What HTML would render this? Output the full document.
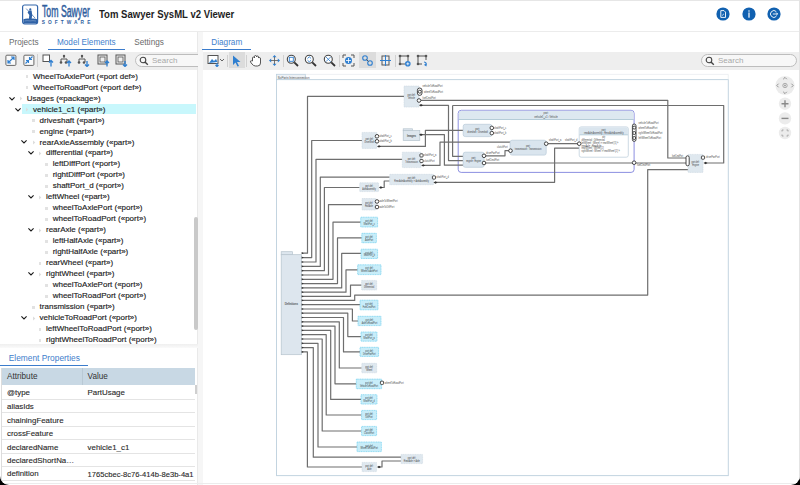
<!DOCTYPE html>
<html><head><meta charset="utf-8">
<style>
*{box-sizing:border-box;margin:0;padding:0}
html,body{width:800px;height:485px;overflow:hidden;background:#000}
body{font-family:"Liberation Sans", sans-serif;position:relative}
#app{position:absolute;left:0;top:0;width:800px;height:485px;background:#fff;border-bottom-left-radius:9px;border-bottom-right-radius:9px;overflow:hidden}
.a{position:absolute}
.t{position:absolute;white-space:nowrap;line-height:1}
svg text{font-family:"Liberation Sans", sans-serif}
</style></head><body>
<div id="app">
<svg class="a" style="left:0;top:0" width="800" height="485" viewBox="0 0 800 485">
<rect x="276.5" y="79.6" width="451.8" height="396" fill="#fff" stroke="#c3d4e0" stroke-width="1"/>
<path d="M305.3,74.4 H728.3 V79.6" fill="none" stroke="#e6ebef" stroke-width="0.7"/>
<rect x="276.5" y="74.3" width="28.8" height="5.3" fill="#eef2f6" stroke="#bcd0de" stroke-width="0.8"/>
<text transform="translate(277.8,78.6) scale(1,1.4)" font-size="3.0" fill="#2a2a2a" stroke="#2a2a2a" stroke-width="0.05" text-anchor="start" opacity="0.65">SoParts Interconnection</text>
<rect x="458.2" y="110.3" width="175.9" height="62.1" rx="3" fill="#fff" stroke="#7f82dc" stroke-width="0.9"/>
<path d="M458.7,119.5 V113.3 Q458.7,110.8 461.2,110.8 H631.1 Q633.6,110.8 633.6,113.3 V119.5 Z" fill="#dde8f0"/>
<line x1="458.7" y1="119.5" x2="633.6" y2="119.5" stroke="#8fb2c3" stroke-width="0.6"/>
<text transform="translate(546,114.3) scale(1,1.4)" font-size="2.5" fill="#2a2a2a" stroke="#2a2a2a" stroke-width="0.05" text-anchor="middle" opacity="0.65">part:</text>
<text transform="translate(546,117.6) scale(1,1.4)" font-size="2.5" fill="#2a2a2a" stroke="#2a2a2a" stroke-width="0.05" text-anchor="middle" opacity="0.65">vehicle1_c1 : Vehicle</text>
<polyline points="421,100.3 667.8,100.3 667.8,158 687,158" fill="none" stroke="#6e6e6e" stroke-width="1.2" stroke-linejoin="round"/>
<polyline points="452.6,105.5 723.7,105.5 723.7,163 705.5,163" fill="none" stroke="#6e6e6e" stroke-width="1.2" stroke-linejoin="round"/>
<polyline points="421,105.3 448.5,105.3 448.5,160.6 463,160.6" fill="none" stroke="#6e6e6e" stroke-width="1.2" stroke-linejoin="round"/>
<polyline points="452.6,105.5 452.6,156.3 463,156.3" fill="none" stroke="#6e6e6e" stroke-width="1.2" stroke-linejoin="round"/>
<polyline points="421,134.7 444.4,134.7 444.4,165.2 463,165.2" fill="none" stroke="#6e6e6e" stroke-width="1.2" stroke-linejoin="round"/>
<polyline points="379,146.4 425.4,146.4 425.4,130.4 463,130.4" fill="none" stroke="#6e6e6e" stroke-width="1.2" stroke-linejoin="round"/>
<polyline points="423.2,165.4 440,165.4 440,142.2 510.3,142.2" fill="none" stroke="#6e6e6e" stroke-width="1.2" stroke-linejoin="round"/>
<polyline points="435.5,182.3 554.6,182.3 554.6,148.2 579.3,148.2" fill="none" stroke="#6e6e6e" stroke-width="1.2" stroke-linejoin="round"/>
<polyline points="380.7,187.5 384.2,187.5 384.2,181 389.7,181" fill="none" stroke="#6e6e6e" stroke-width="1.2" stroke-linejoin="round"/>
<polyline points="484,155.8 505,155.8 505,150.7 510.5,150.7" fill="none" stroke="#6e6e6e" stroke-width="1.2" stroke-linejoin="round"/>
<polyline points="546.2,143.7 579.2,143.7" fill="none" stroke="#6e6e6e" stroke-width="1.2" stroke-linejoin="round"/>
<polyline points="484,163 687,163" fill="none" stroke="#6e6e6e" stroke-width="1.2" stroke-linejoin="round"/>
<polyline points="688,169.6 647.7,169.6 647.7,295.1 354.7,295.1 354.7,300.4 302,300.4" fill="none" stroke="#6e6e6e" stroke-width="1.2" stroke-linejoin="round"/>
<polyline points="302,253.2 307.5,253.2 307.5,96.4 404,96.4" fill="none" stroke="#6e6e6e" stroke-width="1.2" stroke-linejoin="round"/>
<polyline points="302,257.6 311.7,257.6 311.7,140.5 362,140.5" fill="none" stroke="#6e6e6e" stroke-width="1.2" stroke-linejoin="round"/>
<polyline points="302,262.0 316.0,262.0 316.0,159.3 402.3,159.3" fill="none" stroke="#6e6e6e" stroke-width="1.2" stroke-linejoin="round"/>
<polyline points="302,266.4 320.3,266.4 320.3,177.1 389.7,177.1" fill="none" stroke="#6e6e6e" stroke-width="1.2" stroke-linejoin="round"/>
<polyline points="302,270.7 324.4,270.7 324.4,187.5 359.7,187.5" fill="none" stroke="#6e6e6e" stroke-width="1.2" stroke-linejoin="round"/>
<polyline points="302,275.0 328.5,275.0 328.5,204.6 362,204.6" fill="none" stroke="#6e6e6e" stroke-width="1.2" stroke-linejoin="round"/>
<polyline points="302,279.3 333.0,279.3 333.0,222.2 360.7,222.2" fill="none" stroke="#6e6e6e" stroke-width="1.2" stroke-linejoin="round"/>
<polyline points="302,283.6 337.5,283.6 337.5,237.8 361.8,237.8" fill="none" stroke="#6e6e6e" stroke-width="1.2" stroke-linejoin="round"/>
<polyline points="302,287.9 341.7,287.9 341.7,253.3 361,253.3" fill="none" stroke="#6e6e6e" stroke-width="1.2" stroke-linejoin="round"/>
<polyline points="302,292.2 346.0,292.2 346.0,269.8 357.7,269.8" fill="none" stroke="#6e6e6e" stroke-width="1.2" stroke-linejoin="round"/>
<polyline points="302,296.4 350.5,296.4 350.5,285.2 361.6,285.2" fill="none" stroke="#6e6e6e" stroke-width="1.2" stroke-linejoin="round"/>
<polyline points="302,304.6 360,304.6" fill="none" stroke="#6e6e6e" stroke-width="1.2" stroke-linejoin="round"/>
<polyline points="302,309.0 352.4,309.0 352.4,321.0 358,321.0" fill="none" stroke="#6e6e6e" stroke-width="1.2" stroke-linejoin="round"/>
<polyline points="302,313.2 347.8,313.2 347.8,336.6 361,336.6" fill="none" stroke="#6e6e6e" stroke-width="1.2" stroke-linejoin="round"/>
<polyline points="302,317.5 343.5,317.5 343.5,351.9 360,351.9" fill="none" stroke="#6e6e6e" stroke-width="1.2" stroke-linejoin="round"/>
<polyline points="302,321.8 339.3,321.8 339.3,368.0 361.7,368.0" fill="none" stroke="#6e6e6e" stroke-width="1.2" stroke-linejoin="round"/>
<polyline points="302,326.1 335.0,326.1 335.0,383.8 356.3,383.8" fill="none" stroke="#6e6e6e" stroke-width="1.2" stroke-linejoin="round"/>
<polyline points="302,330.4 330.7,330.4 330.7,399.4 361,399.4" fill="none" stroke="#6e6e6e" stroke-width="1.2" stroke-linejoin="round"/>
<polyline points="302,334.7 326.2,334.7 326.2,415.0 361.6,415.0" fill="none" stroke="#6e6e6e" stroke-width="1.2" stroke-linejoin="round"/>
<polyline points="302,339.0 322.2,339.0 322.2,431.0 361.6,431.0" fill="none" stroke="#6e6e6e" stroke-width="1.2" stroke-linejoin="round"/>
<polyline points="302,343.3 318.0,343.3 318.0,447.0 357,447.0" fill="none" stroke="#6e6e6e" stroke-width="1.2" stroke-linejoin="round"/>
<polyline points="302,347.6 313.3,347.6 313.3,457.2 401,457.2" fill="none" stroke="#6e6e6e" stroke-width="1.2" stroke-linejoin="round"/>
<polyline points="302,351.9 307.4,351.9 307.4,467.0 362,467.0" fill="none" stroke="#6e6e6e" stroke-width="1.2" stroke-linejoin="round"/>
<polyline points="379,467 382,467 382,461 401,461" fill="none" stroke="#6e6e6e" stroke-width="1.2" stroke-linejoin="round"/>
<rect x="281.2" y="251.7" width="11.3" height="3.2" fill="#dde6ee" stroke="#b5c3cd" stroke-width="0.7"/>
<rect x="281.2" y="254.7" width="20.3" height="100" fill="#dde6ee" stroke="#b5c3cd" stroke-width="0.7"/>
<text transform="translate(291.3,305) scale(1,1.4)" font-size="2.8" fill="#2a2a2a" stroke="#2a2a2a" stroke-width="0.14" text-anchor="middle" opacity="0.65">Definitions</text>
<path d="M301.6,252.1 L303.8,253.2 L301.6,254.29999999999998 Z" fill="#333"/>
<path d="M301.6,256.5 L303.8,257.6 L301.6,258.70000000000005 Z" fill="#333"/>
<path d="M301.6,260.9 L303.8,262.0 L301.6,263.1 Z" fill="#333"/>
<path d="M301.6,265.29999999999995 L303.8,266.4 L301.6,267.5 Z" fill="#333"/>
<path d="M301.6,269.59999999999997 L303.8,270.7 L301.6,271.8 Z" fill="#333"/>
<path d="M301.6,273.9 L303.8,275.0 L301.6,276.1 Z" fill="#333"/>
<path d="M301.6,278.2 L303.8,279.3 L301.6,280.40000000000003 Z" fill="#333"/>
<path d="M301.6,282.5 L303.8,283.6 L301.6,284.70000000000005 Z" fill="#333"/>
<path d="M301.6,286.79999999999995 L303.8,287.9 L301.6,289.0 Z" fill="#333"/>
<path d="M301.6,291.09999999999997 L303.8,292.2 L301.6,293.3 Z" fill="#333"/>
<path d="M301.6,295.29999999999995 L303.8,296.4 L301.6,297.5 Z" fill="#333"/>
<path d="M301.6,307.9 L303.8,309.0 L301.6,310.1 Z" fill="#333"/>
<path d="M301.6,312.09999999999997 L303.8,313.2 L301.6,314.3 Z" fill="#333"/>
<path d="M301.6,316.4 L303.8,317.5 L301.6,318.6 Z" fill="#333"/>
<path d="M301.6,320.7 L303.8,321.8 L301.6,322.90000000000003 Z" fill="#333"/>
<path d="M301.6,325.0 L303.8,326.1 L301.6,327.20000000000005 Z" fill="#333"/>
<path d="M301.6,329.29999999999995 L303.8,330.4 L301.6,331.5 Z" fill="#333"/>
<path d="M301.6,333.59999999999997 L303.8,334.7 L301.6,335.8 Z" fill="#333"/>
<path d="M301.6,337.9 L303.8,339.0 L301.6,340.1 Z" fill="#333"/>
<path d="M301.6,342.2 L303.8,343.3 L301.6,344.40000000000003 Z" fill="#333"/>
<path d="M301.6,346.5 L303.8,347.6 L301.6,348.70000000000005 Z" fill="#333"/>
<path d="M301.6,350.79999999999995 L303.8,351.9 L301.6,353.0 Z" fill="#333"/>
<path d="M301.6,303.5 L303.8,304.6 L301.6,305.7 Z" fill="#333"/>
<path d="M301.6,299.3 L303.8,300.4 L301.6,301.5 Z" fill="#333"/>
<rect x="404" y="86" width="15.100000000000023" height="21.099999999999994" rx="0.3" fill="#dfe8ef" stroke="#c5d2dc" stroke-width="0.5" stroke-dasharray="1.2 0.5"/>
<text transform="translate(411.5,96.2) scale(1,1.55)" font-size="2.15" fill="#2a2a2a" stroke="#2a2a2a" stroke-width="0.06" text-anchor="middle" opacity="0.65">part def:</text>
<text transform="translate(411.5,99.1) scale(1,1.55)" font-size="2.15" fill="#2a2a2a" stroke="#2a2a2a" stroke-width="0.06" text-anchor="middle" opacity="0.65">Vehicle</text>
<rect x="417.4" y="88" width="4.6" height="7.4" rx="2.3" fill="#fff" stroke="#333" stroke-width="0.9"/>
<circle cx="419.8" cy="91.7" r="1.5" fill="#fff" stroke="#333" stroke-width="0.9"/>
<circle cx="419" cy="100.5" r="1.8" fill="#fff" stroke="#333" stroke-width="0.9"/>
<path d="M419,105.3 L421,104.1 L423,105.3 L421,106.5 Z" fill="#333"/>
<text transform="translate(422.5,87.3) scale(1,1.4)" font-size="2.4" fill="#2a2a2a" stroke="#2a2a2a" stroke-width="0.05" text-anchor="start" opacity="0.65">vehicleToRoadPort</text>
<text transform="translate(424,92.6) scale(1,1.4)" font-size="2.4" fill="#2a2a2a" stroke="#2a2a2a" stroke-width="0.05" text-anchor="start" opacity="0.65">wheelToRoadPort</text>
<text transform="translate(422.5,98.8) scale(1,1.4)" font-size="2.4" fill="#2a2a2a" stroke="#2a2a2a" stroke-width="0.05" text-anchor="start" opacity="0.65">fuelCmdPort</text>
<rect x="403.2" y="128.8" width="9.4" height="2" fill="#dde6ee" stroke="#b5c3cd" stroke-width="0.7"/>
<rect x="403.2" y="130.6" width="16.6" height="10" fill="#dde6ee" stroke="#b5c3cd" stroke-width="0.7"/>
<text transform="translate(411.5,137) scale(1,1.4)" font-size="2.7" fill="#2a2a2a" stroke="#2a2a2a" stroke-width="0.14" text-anchor="middle" opacity="0.65">Images</text>
<path d="M419,134.7 L421,133.5 L423,134.7 L421,135.89999999999998 Z" fill="#333"/>
<rect x="362" y="132.4" width="14.800000000000011" height="16.0" rx="0.3" fill="#dfe8ef" stroke="#c5d2dc" stroke-width="0.5" stroke-dasharray="1.2 0.5"/>
<text transform="translate(369.4,140.1) scale(1,1.55)" font-size="2.15" fill="#2a2a2a" stroke="#2a2a2a" stroke-width="0.06" text-anchor="middle" opacity="0.65">part def:</text>
<text transform="translate(369.4,143.0) scale(1,1.55)" font-size="2.15" fill="#2a2a2a" stroke="#2a2a2a" stroke-width="0.06" text-anchor="middle" opacity="0.65">DriveShaft</text>
<circle cx="377" cy="136.3" r="1.8" fill="#fff" stroke="#333" stroke-width="0.9"/>
<circle cx="377" cy="141.3" r="1.8" fill="#fff" stroke="#333" stroke-width="0.9"/>
<text transform="translate(379.5,137) scale(1,1.4)" font-size="2.4" fill="#2a2a2a" stroke="#2a2a2a" stroke-width="0.05" text-anchor="start" opacity="0.65">shaftPort_c</text>
<text transform="translate(379.5,142) scale(1,1.4)" font-size="2.4" fill="#2a2a2a" stroke="#2a2a2a" stroke-width="0.05" text-anchor="start" opacity="0.65">shaftPort_b</text>
<path d="M377,146.4 L379,145.20000000000002 L381,146.4 L379,147.6 Z" fill="#333"/>
<rect x="402.3" y="152.2" width="18.69999999999999" height="15.400000000000006" rx="0.3" fill="#dfe8ef" stroke="#c5d2dc" stroke-width="0.5" stroke-dasharray="1.2 0.5"/>
<text transform="translate(411.6,159.6) scale(1,1.55)" font-size="2.15" fill="#2a2a2a" stroke="#2a2a2a" stroke-width="0.06" text-anchor="middle" opacity="0.65">part def:</text>
<text transform="translate(411.6,162.5) scale(1,1.55)" font-size="2.15" fill="#2a2a2a" stroke="#2a2a2a" stroke-width="0.06" text-anchor="middle" opacity="0.65">Transmission</text>
<rect x="419.9" y="153.8" width="3.2" height="3.2" rx="0.8" fill="#fff" stroke="#333" stroke-width="0.9"/>
<rect x="419.9" y="159.4" width="3.2" height="3.2" rx="0.8" fill="#fff" stroke="#333" stroke-width="0.9"/>
<text transform="translate(424,156) scale(1,1.4)" font-size="2.4" fill="#2a2a2a" stroke="#2a2a2a" stroke-width="0.05" text-anchor="start" opacity="0.65">shaftPort_a</text>
<text transform="translate(424,161.6) scale(1,1.4)" font-size="2.4" fill="#2a2a2a" stroke="#2a2a2a" stroke-width="0.05" text-anchor="start" opacity="0.65">clutchPort</text>
<path d="M421.2,165.4 L423.2,164.20000000000002 L425.2,165.4 L423.2,166.6 Z" fill="#333"/>
<rect x="389.7" y="174.3" width="43.900000000000034" height="10.399999999999977" rx="0.3" fill="#dfe8ef" stroke="#c5d2dc" stroke-width="0.5" stroke-dasharray="1.2 0.5"/>
<text transform="translate(411.6,179.2) scale(1,1.55)" font-size="2.15" fill="#2a2a2a" stroke="#2a2a2a" stroke-width="0.06" text-anchor="middle" opacity="0.65">part def:</text>
<text transform="translate(411.6,182.1) scale(1,1.55)" font-size="2.15" fill="#2a2a2a" stroke="#2a2a2a" stroke-width="0.06" text-anchor="middle" opacity="0.65">RearAxleAssembly :> AxleAssembly</text>
<rect x="432.4" y="175.9" width="3.2" height="3.2" rx="0.8" fill="#fff" stroke="#333" stroke-width="0.9"/>
<text transform="translate(436.5,178.2) scale(1,1.4)" font-size="2.4" fill="#2a2a2a" stroke="#2a2a2a" stroke-width="0.05" text-anchor="start" opacity="0.65">shaftPort_d</text>
<path d="M433.5,182.5 L435.5,181.3 L437.5,182.5 L435.5,183.7 Z" fill="#333"/>
<rect x="359.7" y="182.8" width="18.900000000000034" height="8.799999999999983" rx="0.3" fill="#dfe8ef" stroke="#c5d2dc" stroke-width="0.5" stroke-dasharray="1.2 0.5"/>
<text transform="translate(369.1,186.89999999999998) scale(1,1.55)" font-size="2.15" fill="#2a2a2a" stroke="#2a2a2a" stroke-width="0.06" text-anchor="middle" opacity="0.65">part def:</text>
<text transform="translate(369.1,189.79999999999998) scale(1,1.55)" font-size="2.15" fill="#2a2a2a" stroke="#2a2a2a" stroke-width="0.06" text-anchor="middle" opacity="0.65">AxleAssembly</text>
<path d="M378.9,187.5 L380.9,186.3 L382.9,187.5 L380.9,188.7 Z" fill="#333"/>
<rect x="362" y="198.5" width="14" height="11.5" rx="0.3" fill="#dfe8ef" stroke="#c5d2dc" stroke-width="0.5" stroke-dasharray="1.2 0.5"/>
<text transform="translate(369,203.89999999999998) scale(1,1.55)" font-size="2.15" fill="#2a2a2a" stroke="#2a2a2a" stroke-width="0.06" text-anchor="middle" opacity="0.65">part def:</text>
<text transform="translate(369,206.79999999999998) scale(1,1.55)" font-size="2.15" fill="#2a2a2a" stroke="#2a2a2a" stroke-width="0.06" text-anchor="middle" opacity="0.65">HalfAxle</text>
<circle cx="377" cy="201.5" r="1.8" fill="#fff" stroke="#333" stroke-width="0.9"/>
<circle cx="377" cy="207" r="1.8" fill="#fff" stroke="#333" stroke-width="0.9"/>
<text transform="translate(379.5,202.2) scale(1,1.4)" font-size="2.4" fill="#2a2a2a" stroke="#2a2a2a" stroke-width="0.05" text-anchor="start" opacity="0.65">axleToWheelPort</text>
<text transform="translate(379.5,207.7) scale(1,1.4)" font-size="2.4" fill="#2a2a2a" stroke="#2a2a2a" stroke-width="0.05" text-anchor="start" opacity="0.65">axleToDiffPort</text>
<rect x="360.7" y="217.2" width="16.900000000000034" height="9.800000000000011" rx="0.3" fill="#c8edf9" stroke="#5ec9ec" stroke-width="0.6" stroke-dasharray="1.2 0.5"/>
<text transform="translate(369.1,221.79999999999998) scale(1,1.55)" font-size="2.15" fill="#2a2a2a" stroke="#2a2a2a" stroke-width="0.06" text-anchor="middle" opacity="0.65">port def:</text>
<text transform="translate(369.1,224.7) scale(1,1.55)" font-size="2.15" fill="#2a2a2a" stroke="#2a2a2a" stroke-width="0.06" text-anchor="middle" opacity="0.65">ShaftPort_c</text>
<rect x="361.8" y="233.3" width="14.599999999999966" height="9.399999999999977" rx="0.3" fill="#c8edf9" stroke="#5ec9ec" stroke-width="0.6" stroke-dasharray="1.2 0.5"/>
<text transform="translate(369.1,237.7) scale(1,1.55)" font-size="2.15" fill="#2a2a2a" stroke="#2a2a2a" stroke-width="0.06" text-anchor="middle" opacity="0.65">port def:</text>
<text transform="translate(369.1,240.6) scale(1,1.55)" font-size="2.15" fill="#2a2a2a" stroke="#2a2a2a" stroke-width="0.06" text-anchor="middle" opacity="0.65">AxlePort</text>
<rect x="361" y="249.2" width="16.600000000000023" height="9.300000000000011" rx="0.3" fill="#c8edf9" stroke="#5ec9ec" stroke-width="0.6" stroke-dasharray="1.2 0.5"/>
<text transform="translate(369.3,253.5) scale(1,1.55)" font-size="2.15" fill="#2a2a2a" stroke="#2a2a2a" stroke-width="0.06" text-anchor="middle" opacity="0.65">port def:</text>
<text transform="translate(369.3,256.40000000000003) scale(1,1.55)" font-size="2.15" fill="#2a2a2a" stroke="#2a2a2a" stroke-width="0.06" text-anchor="middle" opacity="0.65">ShaftPort_b</text>
<rect x="357.7" y="264.8" width="23.30000000000001" height="9.800000000000011" rx="0.3" fill="#c8edf9" stroke="#5ec9ec" stroke-width="0.6" stroke-dasharray="1.2 0.5"/>
<text transform="translate(369.3,269.4) scale(1,1.55)" font-size="2.15" fill="#2a2a2a" stroke="#2a2a2a" stroke-width="0.06" text-anchor="middle" opacity="0.65">port def:</text>
<text transform="translate(369.3,272.3) scale(1,1.55)" font-size="2.15" fill="#2a2a2a" stroke="#2a2a2a" stroke-width="0.06" text-anchor="middle" opacity="0.65">WheelToAxlePort</text>
<rect x="361.6" y="280.4" width="15.099999999999966" height="9.600000000000023" rx="0.3" fill="#dfe8ef" stroke="#c5d2dc" stroke-width="0.5" stroke-dasharray="1.2 0.5"/>
<text transform="translate(369.1,284.9) scale(1,1.55)" font-size="2.15" fill="#2a2a2a" stroke="#2a2a2a" stroke-width="0.06" text-anchor="middle" opacity="0.65">part def:</text>
<text transform="translate(369.1,287.8) scale(1,1.55)" font-size="2.15" fill="#2a2a2a" stroke="#2a2a2a" stroke-width="0.06" text-anchor="middle" opacity="0.65">Differential</text>
<rect x="360" y="300.2" width="18" height="9.600000000000023" rx="0.3" fill="#c8edf9" stroke="#5ec9ec" stroke-width="0.6" stroke-dasharray="1.2 0.5"/>
<text transform="translate(369,304.7) scale(1,1.55)" font-size="2.15" fill="#2a2a2a" stroke="#2a2a2a" stroke-width="0.06" text-anchor="middle" opacity="0.65">port def:</text>
<text transform="translate(369,307.6) scale(1,1.55)" font-size="2.15" fill="#2a2a2a" stroke="#2a2a2a" stroke-width="0.06" text-anchor="middle" opacity="0.65">FuelCmdPort</text>
<rect x="358" y="316.3" width="23" height="9.300000000000011" rx="0.3" fill="#c8edf9" stroke="#5ec9ec" stroke-width="0.6" stroke-dasharray="1.2 0.5"/>
<text transform="translate(369.5,320.7) scale(1,1.55)" font-size="2.15" fill="#2a2a2a" stroke="#2a2a2a" stroke-width="0.06" text-anchor="middle" opacity="0.65">port def:</text>
<text transform="translate(369.5,323.6) scale(1,1.55)" font-size="2.15" fill="#2a2a2a" stroke="#2a2a2a" stroke-width="0.06" text-anchor="middle" opacity="0.65">AxleToRoadPort</text>
<rect x="361" y="332" width="16" height="9.199999999999989" rx="0.3" fill="#c8edf9" stroke="#5ec9ec" stroke-width="0.6" stroke-dasharray="1.2 0.5"/>
<text transform="translate(369,336.3) scale(1,1.55)" font-size="2.15" fill="#2a2a2a" stroke="#2a2a2a" stroke-width="0.06" text-anchor="middle" opacity="0.65">port def:</text>
<text transform="translate(369,339.20000000000005) scale(1,1.55)" font-size="2.15" fill="#2a2a2a" stroke="#2a2a2a" stroke-width="0.06" text-anchor="middle" opacity="0.65">ShaftPort_a</text>
<rect x="360" y="347.3" width="18.600000000000023" height="9.099999999999966" rx="0.3" fill="#c8edf9" stroke="#5ec9ec" stroke-width="0.6" stroke-dasharray="1.2 0.5"/>
<text transform="translate(369.3,351.59999999999997) scale(1,1.55)" font-size="2.15" fill="#2a2a2a" stroke="#2a2a2a" stroke-width="0.06" text-anchor="middle" opacity="0.65">port def:</text>
<text transform="translate(369.3,354.5) scale(1,1.55)" font-size="2.15" fill="#2a2a2a" stroke="#2a2a2a" stroke-width="0.06" text-anchor="middle" opacity="0.65">DrivePwrPort</text>
<rect x="361.8" y="363.3" width="14.899999999999977" height="9.5" rx="0.3" fill="#dfe8ef" stroke="#c5d2dc" stroke-width="0.5" stroke-dasharray="1.2 0.5"/>
<text transform="translate(369.2,367.7) scale(1,1.55)" font-size="2.15" fill="#2a2a2a" stroke="#2a2a2a" stroke-width="0.06" text-anchor="middle" opacity="0.65">part def:</text>
<text transform="translate(369.2,370.6) scale(1,1.55)" font-size="2.15" fill="#2a2a2a" stroke="#2a2a2a" stroke-width="0.06" text-anchor="middle" opacity="0.65">Wheel</text>
<rect x="356.3" y="379.1" width="25.30000000000001" height="9.599999999999966" rx="0.3" fill="#c8edf9" stroke="#5ec9ec" stroke-width="0.6" stroke-dasharray="1.2 0.5"/>
<text transform="translate(369,383.59999999999997) scale(1,1.55)" font-size="2.15" fill="#2a2a2a" stroke="#2a2a2a" stroke-width="0.06" text-anchor="middle" opacity="0.65">port def:</text>
<text transform="translate(369,386.5) scale(1,1.55)" font-size="2.15" fill="#2a2a2a" stroke="#2a2a2a" stroke-width="0.06" text-anchor="middle" opacity="0.65">VehicleToRoadPort</text>
<rect x="380.4" y="381.2" width="3.2" height="3.2" rx="0.8" fill="#fff" stroke="#333" stroke-width="0.9"/>
<text transform="translate(384.8,383.5) scale(1,1.4)" font-size="2.4" fill="#2a2a2a" stroke="#2a2a2a" stroke-width="0.05" text-anchor="start" opacity="0.65">wheelToRoadPort</text>
<rect x="361" y="394.7" width="16" height="9.400000000000034" rx="0.3" fill="#c8edf9" stroke="#5ec9ec" stroke-width="0.6" stroke-dasharray="1.2 0.5"/>
<text transform="translate(369,399.09999999999997) scale(1,1.55)" font-size="2.15" fill="#2a2a2a" stroke="#2a2a2a" stroke-width="0.06" text-anchor="middle" opacity="0.65">port def:</text>
<text transform="translate(369,402.0) scale(1,1.55)" font-size="2.15" fill="#2a2a2a" stroke="#2a2a2a" stroke-width="0.06" text-anchor="middle" opacity="0.65">ShaftPort_d</text>
<rect x="361.6" y="410.4" width="15.0" height="9.200000000000045" rx="0.3" fill="#c8edf9" stroke="#5ec9ec" stroke-width="0.6" stroke-dasharray="1.2 0.5"/>
<text transform="translate(369.1,414.7) scale(1,1.55)" font-size="2.15" fill="#2a2a2a" stroke="#2a2a2a" stroke-width="0.06" text-anchor="middle" opacity="0.65">port def:</text>
<text transform="translate(369.1,417.6) scale(1,1.55)" font-size="2.15" fill="#2a2a2a" stroke="#2a2a2a" stroke-width="0.06" text-anchor="middle" opacity="0.65">DiffPort</text>
<rect x="361.6" y="426.4" width="15.0" height="9.200000000000045" rx="0.3" fill="#c8edf9" stroke="#5ec9ec" stroke-width="0.6" stroke-dasharray="1.2 0.5"/>
<text transform="translate(369.1,430.7) scale(1,1.55)" font-size="2.15" fill="#2a2a2a" stroke="#2a2a2a" stroke-width="0.06" text-anchor="middle" opacity="0.65">port def:</text>
<text transform="translate(369.1,433.6) scale(1,1.55)" font-size="2.15" fill="#2a2a2a" stroke="#2a2a2a" stroke-width="0.06" text-anchor="middle" opacity="0.65">ClutchPort</text>
<rect x="357" y="442" width="24.399999999999977" height="9.600000000000023" rx="0.3" fill="#c8edf9" stroke="#5ec9ec" stroke-width="0.6" stroke-dasharray="1.2 0.5"/>
<text transform="translate(369.2,446.5) scale(1,1.55)" font-size="2.15" fill="#2a2a2a" stroke="#2a2a2a" stroke-width="0.06" text-anchor="middle" opacity="0.65">port def:</text>
<text transform="translate(369.2,449.40000000000003) scale(1,1.55)" font-size="2.15" fill="#2a2a2a" stroke="#2a2a2a" stroke-width="0.06" text-anchor="middle" opacity="0.65">WheelToRoadPort</text>
<rect x="401" y="454.4" width="21.600000000000023" height="9.200000000000045" rx="0.3" fill="#dfe8ef" stroke="#c5d2dc" stroke-width="0.5" stroke-dasharray="1.2 0.5"/>
<text transform="translate(411.8,458.7) scale(1,1.55)" font-size="2.15" fill="#2a2a2a" stroke="#2a2a2a" stroke-width="0.06" text-anchor="middle" opacity="0.65">part def:</text>
<text transform="translate(411.8,461.6) scale(1,1.55)" font-size="2.15" fill="#2a2a2a" stroke="#2a2a2a" stroke-width="0.06" text-anchor="middle" opacity="0.65">RearAxle :> Axle</text>
<rect x="362" y="462.4" width="14.600000000000023" height="9.200000000000045" rx="0.3" fill="#dfe8ef" stroke="#c5d2dc" stroke-width="0.5" stroke-dasharray="1.2 0.5"/>
<text transform="translate(369.3,466.7) scale(1,1.55)" font-size="2.15" fill="#2a2a2a" stroke="#2a2a2a" stroke-width="0.06" text-anchor="middle" opacity="0.65">part def:</text>
<text transform="translate(369.3,469.6) scale(1,1.55)" font-size="2.15" fill="#2a2a2a" stroke="#2a2a2a" stroke-width="0.06" text-anchor="middle" opacity="0.65">Axle</text>
<path d="M377,467 L379,465.8 L381,467 L379,468.2 Z" fill="#333"/>
<rect x="463.2" y="124.3" width="28.600000000000023" height="12.299999999999997" rx="2" fill="#dae5ee" stroke="#b8cad8" stroke-width="0.7"/>
<text transform="translate(477.5,130.0) scale(1,1.55)" font-size="2.15" fill="#2a2a2a" stroke="#2a2a2a" stroke-width="0.06" text-anchor="middle" opacity="0.65">part:</text>
<text transform="translate(477.5,132.9) scale(1,1.55)" font-size="2.15" fill="#2a2a2a" stroke="#2a2a2a" stroke-width="0.06" text-anchor="middle" opacity="0.65">driveshaft : Driveshaft</text>
<circle cx="491.8" cy="127.9" r="1.8" fill="#fff" stroke="#333" stroke-width="0.9"/>
<circle cx="491.8" cy="133.1" r="1.8" fill="#fff" stroke="#333" stroke-width="0.9"/>
<text transform="translate(494,128.6) scale(1,1.4)" font-size="2.4" fill="#2a2a2a" stroke="#2a2a2a" stroke-width="0.05" text-anchor="start" opacity="0.65">shaftPort_c</text>
<text transform="translate(494,133.8) scale(1,1.4)" font-size="2.4" fill="#2a2a2a" stroke="#2a2a2a" stroke-width="0.05" text-anchor="start" opacity="0.65">shaftPort_b</text>
<rect x="463.2" y="152.2" width="20.900000000000034" height="15.100000000000023" rx="2" fill="#dae5ee" stroke="#b8cad8" stroke-width="0.7"/>
<text transform="translate(473.6,159.29999999999998) scale(1,1.55)" font-size="2.15" fill="#2a2a2a" stroke="#2a2a2a" stroke-width="0.06" text-anchor="middle" opacity="0.65">part:</text>
<text transform="translate(473.6,162.2) scale(1,1.55)" font-size="2.15" fill="#2a2a2a" stroke="#2a2a2a" stroke-width="0.06" text-anchor="middle" opacity="0.65">engine : Engine</text>
<circle cx="484" cy="155.8" r="1.8" fill="#fff" stroke="#333" stroke-width="0.9"/>
<circle cx="484" cy="163" r="1.8" fill="#fff" stroke="#333" stroke-width="0.9"/>
<text transform="translate(486,153.5) scale(1,1.4)" font-size="2.4" fill="#2a2a2a" stroke="#2a2a2a" stroke-width="0.05" text-anchor="start" opacity="0.65">drivePwrPort</text>
<text transform="translate(486,161.2) scale(1,1.4)" font-size="2.4" fill="#2a2a2a" stroke="#2a2a2a" stroke-width="0.05" text-anchor="start" opacity="0.65">fuelCmdPort</text>
<rect x="510.1" y="140.2" width="36.10000000000002" height="14.900000000000006" rx="2" fill="#dae5ee" stroke="#b8cad8" stroke-width="0.7"/>
<text transform="translate(528.1,147.2) scale(1,1.55)" font-size="2.15" fill="#2a2a2a" stroke="#2a2a2a" stroke-width="0.06" text-anchor="middle" opacity="0.65">part:</text>
<text transform="translate(528.1,150.1) scale(1,1.55)" font-size="2.15" fill="#2a2a2a" stroke="#2a2a2a" stroke-width="0.06" text-anchor="middle" opacity="0.65">transmission : Transmission</text>
<circle cx="510.5" cy="150.7" r="1.8" fill="#fff" stroke="#333" stroke-width="0.9"/>
<circle cx="546.2" cy="143.7" r="1.8" fill="#fff" stroke="#333" stroke-width="0.9"/>
<text transform="translate(497,148.3) scale(1,1.4)" font-size="2.4" fill="#2a2a2a" stroke="#2a2a2a" stroke-width="0.05" text-anchor="start" opacity="0.65">clutchPort</text>
<text transform="translate(549,141.2) scale(1,1.4)" font-size="2.4" fill="#2a2a2a" stroke="#2a2a2a" stroke-width="0.05" text-anchor="start" opacity="0.65">shaftPort_a</text>
<text transform="translate(565,141.2) scale(1,1.4)" font-size="2.4" fill="#2a2a2a" stroke="#2a2a2a" stroke-width="0.05" text-anchor="start" opacity="0.65">shaftPort_d</text>
<rect x="579.2" y="126.9" width="49.1" height="30.3" rx="2" fill="#fff" stroke="#b8cad8" stroke-width="0.7"/>
<path d="M579.6,134.9 V129 Q579.6,127.3 581.3,127.3 H626.2 Q627.9,127.3 627.9,129 V134.9 Z" fill="#dae5ee"/>
<line x1="579.6" y1="134.9" x2="627.9" y2="134.9" stroke="#8fb2c3" stroke-width="0.5"/>
<text transform="translate(603.7,130.6) scale(1,1.4)" font-size="2.3" fill="#2a2a2a" stroke="#2a2a2a" stroke-width="0.05" text-anchor="middle" opacity="0.65">part:</text>
<text transform="translate(603.7,133.8) scale(1,1.4)" font-size="2.3" fill="#2a2a2a" stroke="#2a2a2a" stroke-width="0.05" text-anchor="middle" opacity="0.65">rearAxleAssembly : RearAxleAssembly</text>
<text transform="translate(603.7,137.9) scale(1,1.4)" font-size="2.1" fill="#2a2a2a" stroke="#2a2a2a" stroke-width="0.05" text-anchor="middle" opacity="0.65">attr</text>
<text transform="translate(581.5,141.0) scale(1,1.4)" font-size="2.3" fill="#2a2a2a" stroke="#2a2a2a" stroke-width="0.05" text-anchor="start" opacity="0.65">differential : Differential</text>
<text transform="translate(581.5,143.75) scale(1,1.4)" font-size="2.3" fill="#2a2a2a" stroke="#2a2a2a" stroke-width="0.05" text-anchor="start" opacity="0.65">leftWheel : Wheel :> rearWheel [1] »</text>
<text transform="translate(581.5,146.5) scale(1,1.4)" font-size="2.3" fill="#2a2a2a" stroke="#2a2a2a" stroke-width="0.05" text-anchor="start" opacity="0.65">rearAxle : RearAxle</text>
<text transform="translate(581.5,149.25) scale(1,1.4)" font-size="2.3" fill="#2a2a2a" stroke="#2a2a2a" stroke-width="0.05" text-anchor="start" opacity="0.65">rearWheel : Wheel [2]</text>
<text transform="translate(581.5,152.0) scale(1,1.4)" font-size="2.3" fill="#2a2a2a" stroke="#2a2a2a" stroke-width="0.05" text-anchor="start" opacity="0.65">rightWheel : Wheel :> rearWheel [2] »</text>
<circle cx="579.2" cy="143.7" r="1.8" fill="#fff" stroke="#333" stroke-width="0.9"/>
<rect x="632.4" y="124" width="3.6" height="17.4" rx="1.8" fill="#fff" stroke="#333" stroke-width="0.9"/>
<circle cx="634.2" cy="127.6" r="1.5" fill="#fff" stroke="#333" stroke-width="0.9"/>
<circle cx="634.2" cy="133" r="1.5" fill="#fff" stroke="#333" stroke-width="0.9"/>
<circle cx="634.2" cy="138" r="1.5" fill="#fff" stroke="#333" stroke-width="0.9"/>
<circle cx="634.1" cy="162.7" r="1.8" fill="#fff" stroke="#333" stroke-width="0.9"/>
<text transform="translate(638.5,123.6) scale(1,1.4)" font-size="2.4" fill="#2a2a2a" stroke="#2a2a2a" stroke-width="0.05" text-anchor="start" opacity="0.65">vehicleToRoadPort</text>
<text transform="translate(638.5,128.8) scale(1,1.4)" font-size="2.4" fill="#2a2a2a" stroke="#2a2a2a" stroke-width="0.05" text-anchor="start" opacity="0.65">wheelToRoadPort</text>
<text transform="translate(638.5,134) scale(1,1.4)" font-size="2.4" fill="#2a2a2a" stroke="#2a2a2a" stroke-width="0.05" text-anchor="start" opacity="0.65">rightWheelToRoadPort</text>
<text transform="translate(638.5,139.3) scale(1,1.4)" font-size="2.4" fill="#2a2a2a" stroke="#2a2a2a" stroke-width="0.05" text-anchor="start" opacity="0.65">leftWheelToRoadPort</text>
<text transform="translate(637,165.8) scale(1,1.4)" font-size="2.4" fill="#2a2a2a" stroke="#2a2a2a" stroke-width="0.05" text-anchor="start" opacity="0.65">fuelCmdPort</text>
<rect x="688" y="154.4" width="15" height="18.0" rx="0.3" fill="#dfe8ef" stroke="#c5d2dc" stroke-width="0.5" stroke-dasharray="1.2 0.5"/>
<text transform="translate(695.5,162.7) scale(1,1.55)" font-size="2.15" fill="#2a2a2a" stroke="#2a2a2a" stroke-width="0.06" text-anchor="middle" opacity="0.65">part def:</text>
<text transform="translate(695.5,165.6) scale(1,1.55)" font-size="2.15" fill="#2a2a2a" stroke="#2a2a2a" stroke-width="0.06" text-anchor="middle" opacity="0.65">Engine</text>
<rect x="686" y="155.8" width="3.2" height="10" rx="1.6" fill="#fff" stroke="#333" stroke-width="0.9"/>
<rect x="701.4" y="156.0" width="3.2" height="3.2" rx="0.8" fill="#fff" stroke="#333" stroke-width="0.9"/>
<text transform="translate(706,158.3) scale(1,1.4)" font-size="2.4" fill="#2a2a2a" stroke="#2a2a2a" stroke-width="0.05" text-anchor="start" opacity="0.65">drivePwrPort</text>
<path d="M703.5,163 L705.5,161.8 L707.5,163 L705.5,164.2 Z" fill="#333"/>
<text transform="translate(672,157) scale(1,1.4)" font-size="2" fill="#2a2a2a" stroke="#2a2a2a" stroke-width="0.05" text-anchor="start" opacity="0.65">fuelCmdPort</text>
</svg>
<div class="a" style="left:0px;top:0px;width:800px;height:1px;background:#e6e6e6"></div>
<div class="a" style="left:0px;top:31px;width:800px;height:1px;background:#ececec"></div>
<div class="a" style="left:799px;top:0px;width:1px;height:485px;background:#e4e4e4"></div>
<svg class="a" style="left:21px;top:3px" width="19" height="23" viewBox="0 0 19 23">
<rect x="1.6" y="2" width="15" height="18.8" rx="2" fill="#fff" stroke="#3366aa" stroke-width="1.2"/>
<circle cx="9.3" cy="6.4" r="1.1" fill="#2f62a6"/>
<path d="M8 7.6 L10.6 7.6 L11.2 12 L10.6 16.5 L7.8 16.5 L8.3 12 L6.6 9.6 Z" fill="#2f62a6"/>
<path d="M5.2 5.6 L14.2 15.2" stroke="#2f62a6" stroke-width="0.7"/>
<path d="M2.4 16.3 Q5 15.2 9.3 15.8 Q13.5 15.2 16.2 16.3 V20 H2.4 Z" fill="#2f62a6"/>
<path d="M3.5 18 Q6 17.3 9 17.9 Q12 17.3 15 18" stroke="#9db6d8" stroke-width="0.5" fill="none"/>
</svg>
<div class="t" style="left:41.5px;top:4.1px;font-size:15.8px;color:#2f5e9e;transform:scaleX(0.552);transform-origin:0 0;-webkit-text-stroke:0.5px #2f5e9e">Tom Sawyer</div>
<div class="t" style="left:41.8px;top:20.6px;font-size:4.8px;font-weight:bold;color:#2f5e9e;letter-spacing:3.05px">SOFTWARE</div>
<div class="t" style="left:99px;top:8.6px;font-size:11.3px;font-weight:bold;color:#1e1e1e;transform:scaleX(0.845);transform-origin:0 0">Tom Sawyer SysML v2 Viewer</div>
<svg class="a" style="left:716px;top:7.2px" width="14" height="14" viewBox="0 0 14 14"><circle cx="7" cy="7" r="6.6" fill="#1161b0"/><path d="M4.8 3.6 H8 L9.5 5.1 V10.4 H4.8 Z" fill="none" stroke="#fff" stroke-width="0.9"/><path d="M6 8.6 L8 6.8" stroke="#fff" stroke-width="0.7"/></svg>
<svg class="a" style="left:741.5px;top:7.2px" width="14" height="14" viewBox="0 0 14 14"><circle cx="7" cy="7" r="6.6" fill="#1161b0"/><circle cx="7" cy="3.9" r="0.75" fill="#fff"/><rect x="6.4" y="5.5" width="1.2" height="5.2" fill="#fff"/></svg>
<svg class="a" style="left:767px;top:7.2px" width="14" height="14" viewBox="0 0 14 14"><circle cx="7" cy="7" r="6.6" fill="#1161b0"/><path d="M9.3 4.6 A3.4 3.4 0 1 0 9.3 9.4" fill="none" stroke="#fff" stroke-width="0.9"/><path d="M5.8 7 H10.6 M9.2 5.6 L10.6 7 L9.2 8.4" fill="none" stroke="#fff" stroke-width="0.9"/></svg>
<div class="t" style="left:9.00px;top:39.26px;font-size:8.2px;color:#6a6a6a;font-weight:normal;">Projects</div>
<div class="t" style="left:57.00px;top:39.26px;font-size:8.2px;color:#3f80cc;font-weight:normal;">Model Elements</div>
<div class="t" style="left:134.30px;top:39.26px;font-size:8.2px;color:#6a6a6a;font-weight:normal;">Settings</div>
<div class="a" style="left:48px;top:48.8px;width:77px;height:1.6px;background:#3b7ccc"></div>
<div class="a" style="left:0px;top:52px;width:198px;height:17.5px;background:#eeeeee"></div>
<div class="a" style="left:198px;top:32px;width:5px;height:453px;background:#f6f6f6"></div>
<div class="a" style="left:197px;top:32px;width:1px;height:453px;background:#e9e9e9"></div>
<div class="t" style="left:211.30px;top:39.26px;font-size:8.2px;color:#3f80cc;font-weight:normal;">Diagram</div>
<div class="a" style="left:202px;top:48.8px;width:49px;height:1.6px;background:#3b7ccc"></div>
<div class="a" style="left:203px;top:52px;width:596px;height:17.5px;background:#eeeeee"></div>
<div class="a" style="left:229.2px;top:52.2px;width:15.5px;height:16px;background:#dcdcdc"></div>
<div class="a" style="left:359.2px;top:52.2px;width:16.5px;height:16px;background:#dcdcdc"></div>
<div class="a" style="left:135px;top:52px;width:62.5px;height:17px;overflow:hidden"><div class="a" style="left:0;top:1.8px;width:90px;height:12.8px;border:1px solid #bdbdbd;border-radius:7px;background:#f7f7f7"></div></div>
<svg class="a" style="left:139px;top:55.5px" width="10" height="10" viewBox="0 0 10 10"><circle cx="4" cy="4" r="2.8" fill="none" stroke="#444" stroke-width="1.1"/><path d="M6 6 L8.8 8.8" stroke="#444" stroke-width="1.4"/></svg>
<div class="t" style="left:152.00px;top:57.33px;font-size:8px;color:#a8a8a8;font-weight:normal;">Search</div>
<div class="a" style="left:701px;top:53.8px;width:96px;height:12.8px;border:1px solid #bdbdbd;border-radius:7px;background:#f7f7f7"></div>
<svg class="a" style="left:705px;top:55.5px" width="10" height="10" viewBox="0 0 10 10"><circle cx="4" cy="4" r="2.8" fill="none" stroke="#444" stroke-width="1.1"/><path d="M6 6 L8.8 8.8" stroke="#444" stroke-width="1.4"/></svg>
<div class="t" style="left:718.00px;top:57.33px;font-size:8px;color:#a8a8a8;font-weight:normal;">Search</div>
<svg class="a" style="left:4.5px;top:54px" width="13" height="13" viewBox="0 0 13 13"><rect x="0.9" y="1.2" width="10" height="10.2" rx="1" fill="#fafafa" stroke="#666" stroke-width="1"/><path d="M3 9 L9 3 M6 3 H9 V6 M3 6 V9 H6" fill="none" stroke="#2f7fd0" stroke-width="1.2"/></svg>
<svg class="a" style="left:22.5px;top:54px" width="13" height="13" viewBox="0 0 13 13"><rect x="0.9" y="1.2" width="10" height="10.2" rx="1" fill="#fafafa" stroke="#666" stroke-width="1"/><path d="M2.5 9.5 L5 7 M9.5 2.5 L7 5 M3 6.5 H5.5 V9 M9 5.5 H6.5 V3" fill="none" stroke="#2f7fd0" stroke-width="1.1"/></svg>
<div class="a" style="left:37px;top:54px;width:1px;height:13px;background:#d0d0d0"></div>
<svg class="a" style="left:41.5px;top:54px" width="13" height="13" viewBox="0 0 13 13"><rect x="1" y="1" width="6.5" height="6.5" fill="#fff" stroke="#555" stroke-width="1"/><path d="M9 12.5 V6.5 M7 8.5 L9 6.5 L11 8.5" fill="none" stroke="#2f7fd0" stroke-width="1.3"/></svg>
<svg class="a" style="left:59px;top:54px" width="13" height="13" viewBox="0 0 13 13"><path d="M5 1 V4 M2 5 H8 M2 5 V8 M8 5 V8" stroke="#555" stroke-width="1" fill="none"/><circle cx="5" cy="2" r="1.2" fill="#555"/><circle cx="2" cy="8.5" r="1.3" fill="#555"/><circle cx="7" cy="8.5" r="1.3" fill="#555"/><path d="M10 12.5 V7 M8 9 L10 7 L12 9" fill="none" stroke="#2f7fd0" stroke-width="1.3"/></svg>
<svg class="a" style="left:77px;top:54px" width="13" height="13" viewBox="0 0 13 13"><path d="M5 1 V4 M2 5 H8 M2 5 V8 M8 5 V8" stroke="#555" stroke-width="1" fill="none"/><circle cx="5" cy="2" r="1.2" fill="#555"/><circle cx="2" cy="8.5" r="1.3" fill="#555"/><circle cx="7" cy="8.5" r="1.3" fill="#555"/><path d="M10 7 V12.5 M8 10.5 L10 12.5 L12 10.5" fill="none" stroke="#2f7fd0" stroke-width="1.3"/></svg>
<svg class="a" style="left:96.5px;top:54px" width="13" height="13" viewBox="0 0 13 13"><rect x="1" y="1" width="9" height="9" fill="#eee" stroke="#555" stroke-width="1"/><rect x="3" y="3" width="5" height="5" fill="none" stroke="#555" stroke-width="0.8"/><path d="M10 12.5 V7 M8 9 L10 7 L12 9" fill="none" stroke="#2f7fd0" stroke-width="1.3"/></svg>
<svg class="a" style="left:114.5px;top:54px" width="13" height="13" viewBox="0 0 13 13"><rect x="1" y="1" width="9" height="9" fill="#eee" stroke="#555" stroke-width="1"/><rect x="3" y="3" width="5" height="5" fill="none" stroke="#555" stroke-width="0.8"/><path d="M10 7 V12.5 M8 10.5 L10 12.5 L12 10.5" fill="none" stroke="#2f7fd0" stroke-width="1.3"/></svg>
<svg class="a" style="left:206.5px;top:54px" width="13" height="13" viewBox="0 0 13 13"><rect x="1" y="1.5" width="10" height="8" fill="#fff" stroke="#555" stroke-width="1"/><path d="M2 9 L5 5 L7 7 L9 5 L10.5 8" fill="#2f7fd0"/><path d="M10 13 V9 M8.5 11 L10 12.6 L11.5 11" stroke="#2f7fd0" stroke-width="1.2" fill="none"/></svg>
<svg class="a" style="left:219px;top:54px" width="6" height="13" viewBox="0 0 6 13"><path d="M1 5 L3 7 L5 5" fill="none" stroke="#555" stroke-width="0.9"/></svg>
<div class="a" style="left:227.2px;top:55px;width:1px;height:12px;background:#d0d0d0"></div>
<svg class="a" style="left:230px;top:54px" width="13" height="13" viewBox="0 0 13 13"><path d="M3 1.5 L10.5 8 L7 8 L9 12 L7.5 12.5 L5.5 8.5 L3 11 Z" fill="#2f7fd0"/></svg>
<div class="a" style="left:246px;top:55px;width:1px;height:12px;background:#d0d0d0"></div>
<svg class="a" style="left:249.2px;top:54px" width="13" height="13" viewBox="0 0 13 13"><path d="M3.5 7 V4 Q3.5 3 4.5 3 Q5.5 3 5.5 4 V2.5 Q5.5 1.5 6.5 1.5 Q7.5 1.5 7.5 2.5 V3 Q7.5 2 8.5 2 Q9.5 2 9.5 3 V4 Q9.5 3.5 10.5 3.5 Q11.5 3.5 11.5 5 V9 Q11.5 12 8.5 12 H6.5 Q4.5 12 3 10 L1.5 8 Q1 6.8 2.3 6.8 Z" fill="#fff" stroke="#444" stroke-width="0.9"/></svg>
<svg class="a" style="left:268px;top:54px" width="13" height="13" viewBox="0 0 13 13"><path d="M6.5 1 L4.5 3.2 H8.5 Z M6.5 12 L4.5 9.8 H8.5 Z M1 6.5 L3.2 4.5 V8.5 Z M12 6.5 L9.8 4.5 V8.5 Z" fill="#2f7fd0"/><path d="M6.5 3 V10 M3 6.5 H10" stroke="#555" stroke-width="0.8"/></svg>
<div class="a" style="left:282.7px;top:55px;width:1px;height:12px;background:#d0d0d0"></div>
<svg class="a" style="left:286.4px;top:54px" width="13" height="13" viewBox="0 0 13 13"><circle cx="5.3" cy="5.3" r="4" fill="#fff" stroke="#444" stroke-width="1.1"/><path d="M8.3 8.3 L12 12" stroke="#333" stroke-width="1.8"/><rect x="3.3" y="3.3" width="4" height="4" fill="none" stroke="#2f7fd0" stroke-width="0.9"/></svg>
<svg class="a" style="left:304.4px;top:54px" width="13" height="13" viewBox="0 0 13 13"><circle cx="5.3" cy="5.3" r="4" fill="#fff" stroke="#444" stroke-width="1.1"/><path d="M8.3 8.3 L12 12" stroke="#333" stroke-width="1.8"/><path d="M3.5 4.5 L5.3 2.8 L7.1 4.5 M3.5 6.2 L5.3 7.9 L7.1 6.2" fill="none" stroke="#2f7fd0" stroke-width="0.9"/></svg>
<svg class="a" style="left:323.4px;top:54px" width="13" height="13" viewBox="0 0 13 13"><circle cx="5.3" cy="5.3" r="4" fill="#fff" stroke="#444" stroke-width="1.1"/><path d="M8.3 8.3 L12 12" stroke="#333" stroke-width="1.8"/><path d="M3 3 L7.6 7.6 M7.6 3 L3 7.6" stroke="#2f7fd0" stroke-width="0.8"/></svg>
<div class="a" style="left:338.5px;top:55px;width:1px;height:12px;background:#d0d0d0"></div>
<svg class="a" style="left:341.7px;top:54px" width="13" height="13" viewBox="0 0 13 13"><path d="M1 4 V1 H4 M9 1 H12 V4 M12 9 V12 H9 M4 12 H1 V9" fill="none" stroke="#555" stroke-width="1"/><circle cx="6.5" cy="6.5" r="3.5" fill="#2f7fd0"/><path d="M4 6.5 H9 M6.5 4 V9" stroke="#fff" stroke-width="0.8"/></svg>
<svg class="a" style="left:360.5px;top:54px" width="13" height="13" viewBox="0 0 13 13"><rect x="2" y="5" width="9" height="4" fill="none" stroke="#2f7fd0" stroke-width="0"/><circle cx="4" cy="4" r="2.3" fill="none" stroke="#2f7fd0" stroke-width="1.1"/><circle cx="9" cy="9" r="2.3" fill="none" stroke="#2f7fd0" stroke-width="1.1"/><path d="M5.5 5.5 L7.5 7.5" stroke="#555" stroke-width="1"/></svg>
<svg class="a" style="left:379.2px;top:54px" width="13" height="13" viewBox="0 0 13 13"><rect x="3" y="2" width="7" height="9" fill="none" stroke="#555" stroke-width="1"/><path d="M1 6.5 H12 M6.5 1 V12" stroke="#2f7fd0" stroke-width="1"/></svg>
<div class="a" style="left:394.7px;top:55px;width:1px;height:12px;background:#d0d0d0"></div>
<svg class="a" style="left:398.3px;top:54px" width="13" height="13" viewBox="0 0 13 13"><path d="M2 2 H10 V7 M2 2 V10 H7" fill="none" stroke="#555" stroke-width="1"/><circle cx="2" cy="2" r="1.3" fill="#555"/><circle cx="10" cy="2" r="1.3" fill="#555"/><circle cx="2" cy="10" r="1.3" fill="#555"/><circle cx="9.8" cy="9.8" r="2.8" fill="#2f7fd0"/><path d="M8.3 9.8 H11.3 M9.8 8.3 V11.3" stroke="#fff" stroke-width="0.8"/></svg>
<svg class="a" style="left:416.3px;top:54px" width="13" height="13" viewBox="0 0 13 13"><path d="M2 2 H10 V6 M2 2 V10 H6" fill="none" stroke="#555" stroke-width="1"/><circle cx="2" cy="2" r="1.3" fill="#555"/><circle cx="10" cy="2" r="1.3" fill="#555"/><circle cx="2" cy="10" r="1.3" fill="#555"/><path d="M8 8 Q11 8.5 10 11.5 L8.5 10.5" fill="none" stroke="#2f7fd0" stroke-width="1.2"/></svg>
<div class="a" style="left:22px;top:103.5px;width:173.5px;height:10px;background:#c8f7fc"></div>
<div class="a" style="left:0;top:69.5px;width:198px;height:274.5px;overflow:hidden">
<div class="t" style="left:33px;top:3.13px;font-size:8px;color:#222;-webkit-text-stroke:0.15px #222">WheelToAxlePort («port def»)</div>
<div class="a" style="left:25.7px;top:5.90px;width:2.6px;height:2.6px;background:#e2e2e2"></div>
<div class="t" style="left:33px;top:14.11px;font-size:8px;color:#222;-webkit-text-stroke:0.15px #222">WheelToRoadPort («port def»)</div>
<div class="a" style="left:25.7px;top:16.88px;width:2.6px;height:2.6px;background:#e2e2e2"></div>
<div class="t" style="left:26.8px;top:25.09px;font-size:8px;color:#222;-webkit-text-stroke:0.15px #222">Usages («package»)</div>
<svg class="a" style="left:7.600000000000001px;top:26.06px" width="8" height="6" viewBox="0 0 8 6"><path d="M1.4 1.4 L4 4 L6.6 1.4" fill="none" stroke="#1a1a1a" stroke-width="1.1"/></svg>
<svg class="a" style="left:18.8px;top:26.86px" width="4" height="5" viewBox="0 0 4 5"><path d="M1 0.5 L3.3 2.5 L1 4.5 Z" fill="#ddd"/></svg>
<div class="t" style="left:33px;top:36.07px;font-size:8px;color:#222;-webkit-text-stroke:0.15px #222">vehicle1_c1 («part»)</div>
<svg class="a" style="left:13.8px;top:37.04px" width="8" height="6" viewBox="0 0 8 6"><path d="M1.4 1.4 L4 4 L6.6 1.4" fill="none" stroke="#1a1a1a" stroke-width="1.1"/></svg>
<svg class="a" style="left:25px;top:37.84px" width="4" height="5" viewBox="0 0 4 5"><path d="M1 0.5 L3.3 2.5 L1 4.5 Z" fill="#ddd"/></svg>
<div class="t" style="left:39.6px;top:47.05px;font-size:8px;color:#222;-webkit-text-stroke:0.15px #222">driveshaft («part»)</div>
<div class="a" style="left:32.300000000000004px;top:49.82px;width:2.6px;height:2.6px;background:#e2e2e2"></div>
<div class="t" style="left:39.6px;top:58.03px;font-size:8px;color:#222;-webkit-text-stroke:0.15px #222">engine («part»)</div>
<div class="a" style="left:32.300000000000004px;top:60.80px;width:2.6px;height:2.6px;background:#e2e2e2"></div>
<div class="t" style="left:39.6px;top:69.01px;font-size:8px;color:#222;-webkit-text-stroke:0.15px #222">rearAxleAssembly («part»)</div>
<svg class="a" style="left:20.400000000000002px;top:69.98px" width="8" height="6" viewBox="0 0 8 6"><path d="M1.4 1.4 L4 4 L6.6 1.4" fill="none" stroke="#1a1a1a" stroke-width="1.1"/></svg>
<svg class="a" style="left:31.6px;top:70.78px" width="4" height="5" viewBox="0 0 4 5"><path d="M1 0.5 L3.3 2.5 L1 4.5 Z" fill="#ddd"/></svg>
<div class="t" style="left:46px;top:79.99px;font-size:8px;color:#222;-webkit-text-stroke:0.15px #222">differential («part»)</div>
<svg class="a" style="left:26.8px;top:80.96px" width="8" height="6" viewBox="0 0 8 6"><path d="M1.4 1.4 L4 4 L6.6 1.4" fill="none" stroke="#1a1a1a" stroke-width="1.1"/></svg>
<svg class="a" style="left:38px;top:81.76px" width="4" height="5" viewBox="0 0 4 5"><path d="M1 0.5 L3.3 2.5 L1 4.5 Z" fill="#ddd"/></svg>
<div class="t" style="left:52.7px;top:90.97px;font-size:8px;color:#222;-webkit-text-stroke:0.15px #222">leftDiffPort («port»)</div>
<div class="a" style="left:45.400000000000006px;top:93.74px;width:2.6px;height:2.6px;background:#e2e2e2"></div>
<div class="t" style="left:52.7px;top:101.95px;font-size:8px;color:#222;-webkit-text-stroke:0.15px #222">rightDiffPort («port»)</div>
<div class="a" style="left:45.400000000000006px;top:104.72px;width:2.6px;height:2.6px;background:#e2e2e2"></div>
<div class="t" style="left:52.7px;top:112.93px;font-size:8px;color:#222;-webkit-text-stroke:0.15px #222">shaftPort_d («port»)</div>
<div class="a" style="left:45.400000000000006px;top:115.70px;width:2.6px;height:2.6px;background:#e2e2e2"></div>
<div class="t" style="left:46px;top:123.91px;font-size:8px;color:#222;-webkit-text-stroke:0.15px #222">leftWheel («part»)</div>
<svg class="a" style="left:26.8px;top:124.88px" width="8" height="6" viewBox="0 0 8 6"><path d="M1.4 1.4 L4 4 L6.6 1.4" fill="none" stroke="#1a1a1a" stroke-width="1.1"/></svg>
<svg class="a" style="left:38px;top:125.68px" width="4" height="5" viewBox="0 0 4 5"><path d="M1 0.5 L3.3 2.5 L1 4.5 Z" fill="#ddd"/></svg>
<div class="t" style="left:52.7px;top:134.89px;font-size:8px;color:#222;-webkit-text-stroke:0.15px #222">wheelToAxlePort («port»)</div>
<div class="a" style="left:45.400000000000006px;top:137.66px;width:2.6px;height:2.6px;background:#e2e2e2"></div>
<div class="t" style="left:52.7px;top:145.87px;font-size:8px;color:#222;-webkit-text-stroke:0.15px #222">wheelToRoadPort («port»)</div>
<div class="a" style="left:45.400000000000006px;top:148.64px;width:2.6px;height:2.6px;background:#e2e2e2"></div>
<div class="t" style="left:46px;top:156.85px;font-size:8px;color:#222;-webkit-text-stroke:0.15px #222">rearAxle («part»)</div>
<svg class="a" style="left:26.8px;top:157.82px" width="8" height="6" viewBox="0 0 8 6"><path d="M1.4 1.4 L4 4 L6.6 1.4" fill="none" stroke="#1a1a1a" stroke-width="1.1"/></svg>
<svg class="a" style="left:38px;top:158.62px" width="4" height="5" viewBox="0 0 4 5"><path d="M1 0.5 L3.3 2.5 L1 4.5 Z" fill="#ddd"/></svg>
<div class="t" style="left:52.7px;top:167.83px;font-size:8px;color:#222;-webkit-text-stroke:0.15px #222">leftHalfAxle («part»)</div>
<div class="a" style="left:45.400000000000006px;top:170.60px;width:2.6px;height:2.6px;background:#e2e2e2"></div>
<div class="t" style="left:52.7px;top:178.81px;font-size:8px;color:#222;-webkit-text-stroke:0.15px #222">rightHalfAxle («part»)</div>
<div class="a" style="left:45.400000000000006px;top:181.58px;width:2.6px;height:2.6px;background:#e2e2e2"></div>
<div class="t" style="left:46px;top:189.79px;font-size:8px;color:#222;-webkit-text-stroke:0.15px #222">rearWheel («part»)</div>
<div class="a" style="left:38.7px;top:192.56px;width:2.6px;height:2.6px;background:#e2e2e2"></div>
<div class="t" style="left:46px;top:200.77px;font-size:8px;color:#222;-webkit-text-stroke:0.15px #222">rightWheel («part»)</div>
<svg class="a" style="left:26.8px;top:201.74px" width="8" height="6" viewBox="0 0 8 6"><path d="M1.4 1.4 L4 4 L6.6 1.4" fill="none" stroke="#1a1a1a" stroke-width="1.1"/></svg>
<svg class="a" style="left:38px;top:202.54px" width="4" height="5" viewBox="0 0 4 5"><path d="M1 0.5 L3.3 2.5 L1 4.5 Z" fill="#ddd"/></svg>
<div class="t" style="left:52.7px;top:211.75px;font-size:8px;color:#222;-webkit-text-stroke:0.15px #222">wheelToAxlePort («port»)</div>
<div class="a" style="left:45.400000000000006px;top:214.52px;width:2.6px;height:2.6px;background:#e2e2e2"></div>
<div class="t" style="left:52.7px;top:222.73px;font-size:8px;color:#222;-webkit-text-stroke:0.15px #222">wheelToRoadPort («port»)</div>
<div class="a" style="left:45.400000000000006px;top:225.50px;width:2.6px;height:2.6px;background:#e2e2e2"></div>
<div class="t" style="left:39.6px;top:233.71px;font-size:8px;color:#222;-webkit-text-stroke:0.15px #222">transmission («part»)</div>
<div class="a" style="left:32.300000000000004px;top:236.48px;width:2.6px;height:2.6px;background:#e2e2e2"></div>
<div class="t" style="left:39.6px;top:244.69px;font-size:8px;color:#222;-webkit-text-stroke:0.15px #222">vehicleToRoadPort («port»)</div>
<svg class="a" style="left:20.400000000000002px;top:245.66px" width="8" height="6" viewBox="0 0 8 6"><path d="M1.4 1.4 L4 4 L6.6 1.4" fill="none" stroke="#1a1a1a" stroke-width="1.1"/></svg>
<svg class="a" style="left:31.6px;top:246.46px" width="4" height="5" viewBox="0 0 4 5"><path d="M1 0.5 L3.3 2.5 L1 4.5 Z" fill="#ddd"/></svg>
<div class="t" style="left:46px;top:255.67px;font-size:8px;color:#222;-webkit-text-stroke:0.15px #222">leftWheelToRoadPort («port»)</div>
<div class="a" style="left:38.7px;top:258.44px;width:2.6px;height:2.6px;background:#e2e2e2"></div>
<div class="t" style="left:46px;top:266.65px;font-size:8px;color:#222;-webkit-text-stroke:0.15px #222">rightWheelToRoadPort («port»)</div>
<div class="a" style="left:38.7px;top:269.42px;width:2.6px;height:2.6px;background:#e2e2e2"></div>
</div>
<div class="a" style="left:194.3px;top:217px;width:3.6px;height:113px;background:#c9c9c9;border-radius:2px"></div>
<div class="a" style="left:0px;top:343.5px;width:198px;height:4px;background:linear-gradient(#efefef,#fafafa)"></div>
<div class="t" style="left:8.70px;top:354.09px;font-size:8.4px;color:#3f80cc;font-weight:normal;">Element Properties</div>
<div class="a" style="left:0px;top:364.8px;width:88px;height:1.6px;background:#3b7ccc"></div>
<div class="a" style="left:1px;top:367.8px;width:1px;height:118px;background:#dcdcdc"></div>
<div class="a" style="left:2px;top:368px;width:193px;height:17px;background:#c8d8e4"></div>
<div class="a" style="left:82px;top:368px;width:1px;height:17px;background:#b9c9d5"></div>
<div class="t" style="left:7.00px;top:373.46px;font-size:8.2px;color:#333;font-weight:normal;">Attribute</div>
<div class="t" style="left:87.60px;top:373.46px;font-size:8.2px;color:#333;font-weight:normal;">Value</div>
<div class="a" style="left:2px;top:398.7px;width:193px;height:1px;background:#e4e4e4"></div>
<div class="t" style="left:7.00px;top:389.41px;font-size:7.9px;color:#2a2a2a;font-weight:normal;-webkit-text-stroke:0.12px #2a2a2a">@type</div>
<div class="t" style="left:87.60px;top:389.41px;font-size:7.9px;color:#2a2a2a;font-weight:normal;-webkit-text-stroke:0.12px #2a2a2a">PartUsage</div>
<div class="a" style="left:2px;top:412.3px;width:193px;height:1px;background:#e4e4e4"></div>
<div class="t" style="left:7.00px;top:403.01px;font-size:7.9px;color:#2a2a2a;font-weight:normal;-webkit-text-stroke:0.12px #2a2a2a">aliasIds</div>
<div class="a" style="left:2px;top:425.8px;width:193px;height:1px;background:#e4e4e4"></div>
<div class="t" style="left:7.00px;top:416.51px;font-size:7.9px;color:#2a2a2a;font-weight:normal;-webkit-text-stroke:0.12px #2a2a2a">chainingFeature</div>
<div class="a" style="left:2px;top:439.3px;width:193px;height:1px;background:#e4e4e4"></div>
<div class="t" style="left:7.00px;top:430.01px;font-size:7.9px;color:#2a2a2a;font-weight:normal;-webkit-text-stroke:0.12px #2a2a2a">crossFeature</div>
<div class="a" style="left:2px;top:452.8px;width:193px;height:1px;background:#e4e4e4"></div>
<div class="t" style="left:7.00px;top:443.51px;font-size:7.9px;color:#2a2a2a;font-weight:normal;-webkit-text-stroke:0.12px #2a2a2a">declaredName</div>
<div class="t" style="left:87.60px;top:443.51px;font-size:7.9px;color:#2a2a2a;font-weight:normal;-webkit-text-stroke:0.12px #2a2a2a">vehicle1_c1</div>
<div class="a" style="left:2px;top:466.2px;width:193px;height:1px;background:#e4e4e4"></div>
<div class="t" style="left:7.00px;top:456.91px;font-size:7.9px;color:#2a2a2a;font-weight:normal;-webkit-text-stroke:0.12px #2a2a2a">declaredShortNa…</div>
<div class="a" style="left:2px;top:479.7px;width:193px;height:1px;background:#e4e4e4"></div>
<div class="t" style="left:7.00px;top:470.41px;font-size:7.9px;color:#2a2a2a;font-weight:normal;-webkit-text-stroke:0.12px #2a2a2a">definition</div>
<div class="t" style="left:87.60px;top:470.67px;font-size:7.6px;color:#2a2a2a;font-weight:normal;-webkit-text-stroke:0.12px #2a2a2a">1765cbec-8c76-414b-8e3b-4a1</div>
<div class="a" style="left:195px;top:385px;width:2px;height:9px;background:#cfcfcf"></div>
<div class="a" style="left:0px;top:482.5px;width:800px;height:1px;background:#ececec"></div>
<svg class="a" style="left:774px;top:74px" width="22" height="66" viewBox="0 0 22 66">
<circle cx="11" cy="11.5" r="9.6" fill="#ececec"/>
<path d="M9.2 5.2 L11 3.4 L12.8 5.2 M9.2 17.8 L11 19.6 L12.8 17.8 M4.6 9.7 L2.8 11.5 L4.6 13.3 M17.4 9.7 L19.2 11.5 L17.4 13.3" fill="none" stroke="#8a8a8a" stroke-width="0.9"/>
<circle cx="11" cy="11.5" r="2.2" fill="none" stroke="#999" stroke-width="0.8"/><circle cx="11" cy="11.5" r="0.9" fill="#999"/>
<circle cx="11" cy="29.7" r="6.2" fill="#ececec"/>
<path d="M7.5 29.7 H14.5 M11 26.2 V33.2" stroke="#8a8a8a" stroke-width="1.4"/>
<circle cx="11" cy="44.4" r="6.2" fill="#ececec"/>
<path d="M7.5 44.4 H14.5" stroke="#8a8a8a" stroke-width="1.4"/>
<circle cx="11" cy="59" r="6.2" fill="#ececec"/>
<path d="M8 57.5 V56 H9.5 M12.5 56 H14 V57.5 M14 60.5 V62 H12.5 M9.5 62 H8 V60.5" fill="none" stroke="#999" stroke-width="0.8"/>
</svg>
</div>
</body></html>
